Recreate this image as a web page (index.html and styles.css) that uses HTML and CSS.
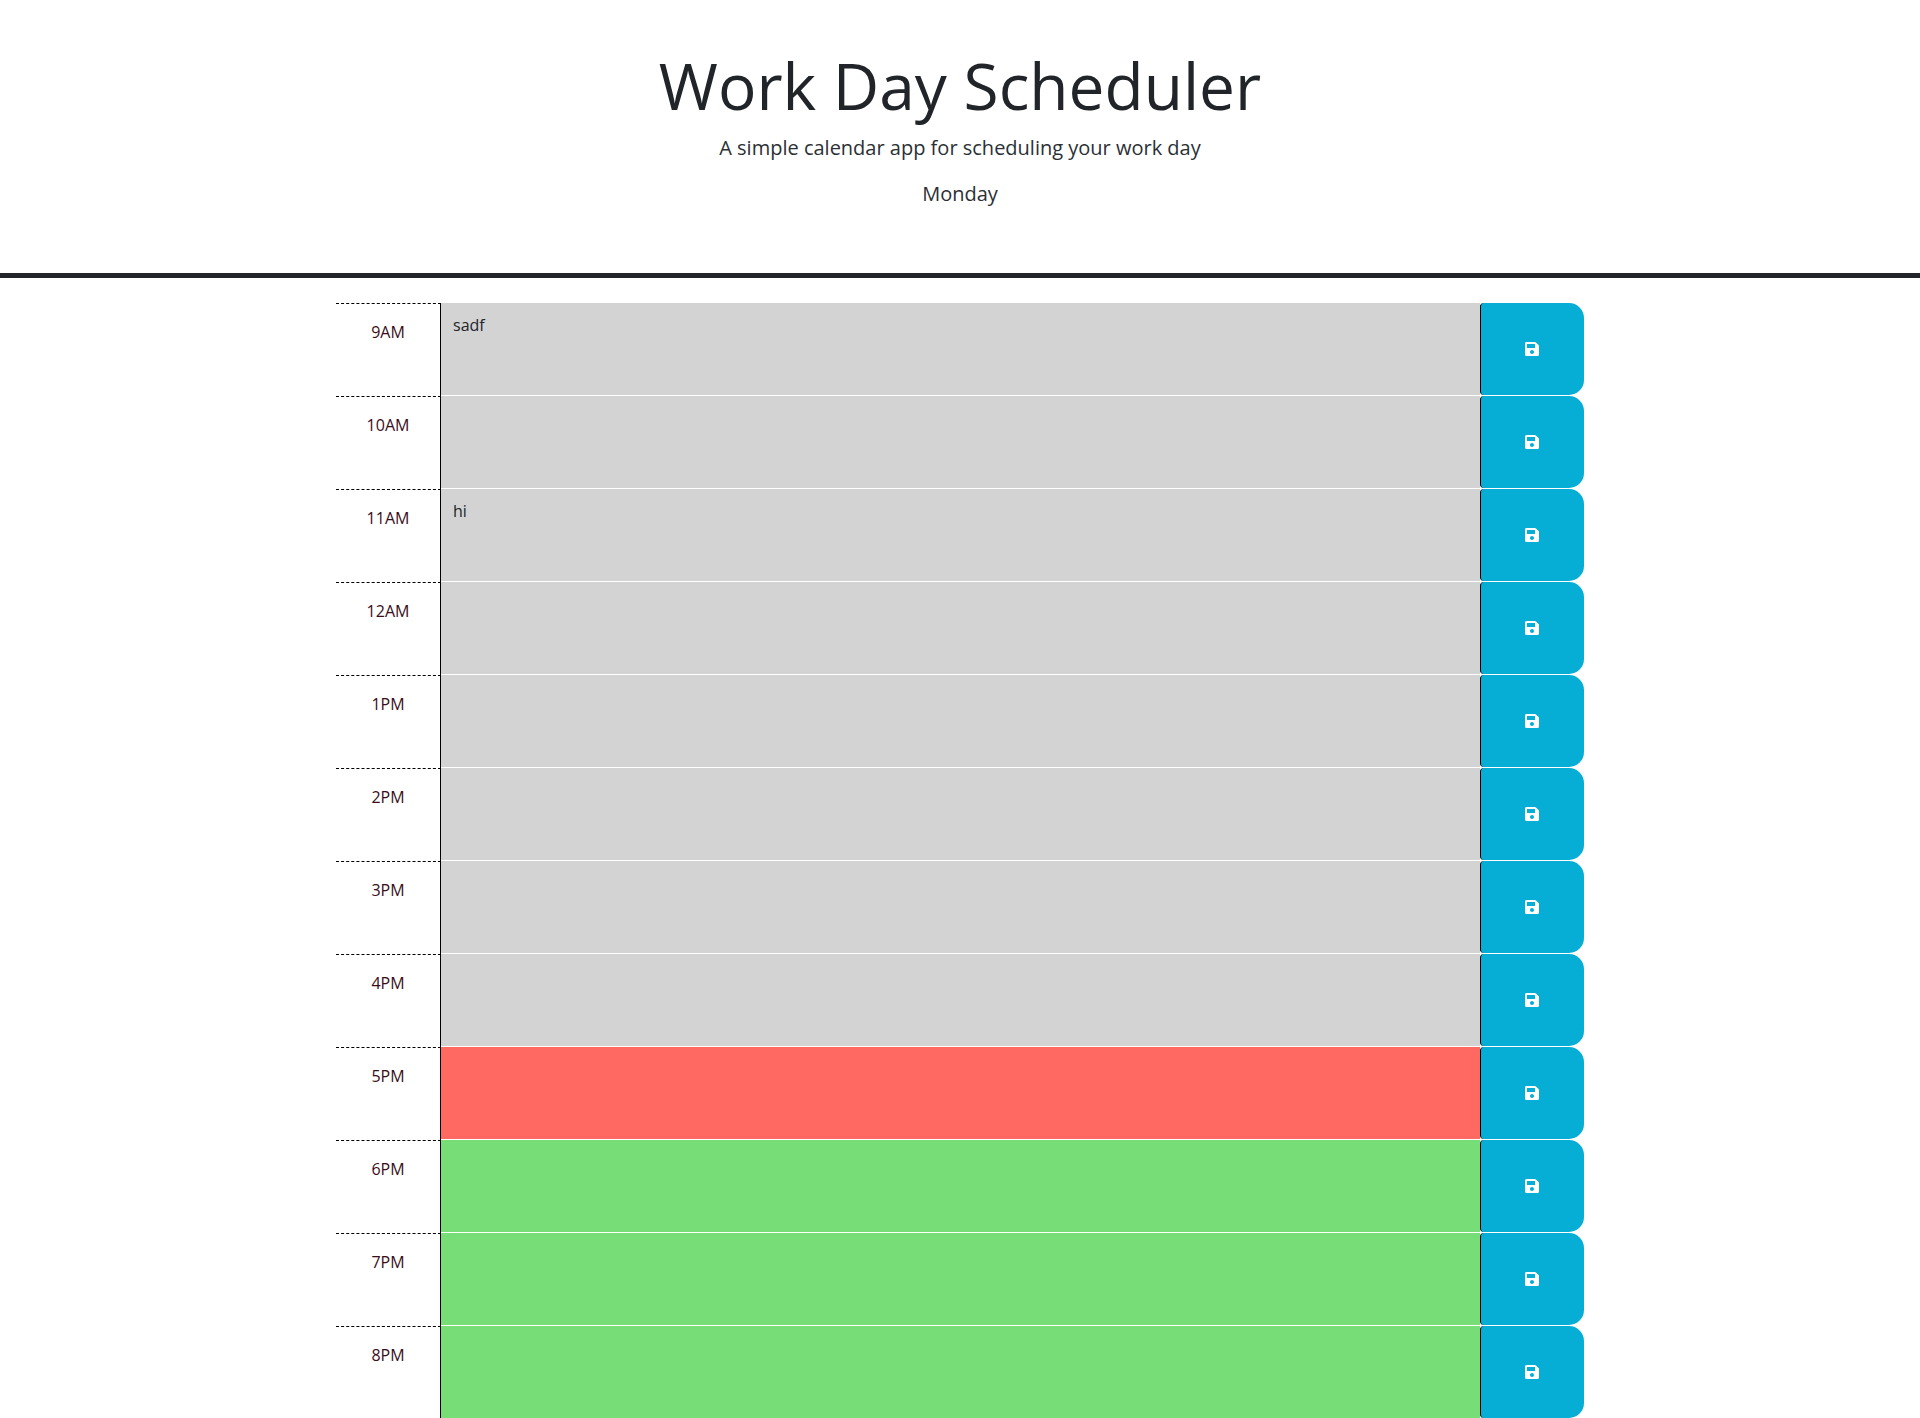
FILE: index.html
```html
<!DOCTYPE html>
<html lang="en">
<head>
<meta charset="utf-8">
<title>Work Day Scheduler</title>
<link rel="stylesheet" href="styles.css">
</head>
<body>
<svg class="defs" width="0" height="0" aria-hidden="true"><symbol id="save" viewBox="0 0 448 512"><path d="M433.941 129.941l-83.882-83.882A48 48 0 0 0 316.118 32H48C21.49 32 0 53.49 0 80v352c0 26.51 21.49 48 48 48h352c26.51 0 48-21.49 48-48V163.882a48 48 0 0 0-14.059-33.941zM224 416c-35.346 0-64-28.654-64-64 0-35.346 28.654-64 64-64s64 28.654 64 64c0 35.346-28.654 64-64 64zm96-304.52V212c0 6.627-5.373 12-12 12H76c-6.627 0-12-5.373-12-12V108c0-6.627 5.373-12 12-12h228.52c3.183 0 6.235 1.264 8.485 3.515l3.48 3.48A11.996 11.996 0 0 1 320 111.48z"/></symbol></svg>
<header class="jumbotron">
  <h1 class="title">Work Day Scheduler</h1>
  <p class="lead">A simple calendar app for scheduling your work day</p>
  <p class="day">Monday</p>
</header>
<main class="schedule">
  <div class="row"><div class="hour">9AM</div><textarea class="task past">sadf</textarea><button class="save" aria-label="Save"><svg class="icon"><use href="#save"/></svg></button></div>
  <div class="row"><div class="hour">10AM</div><textarea class="task past"></textarea><button class="save" aria-label="Save"><svg class="icon"><use href="#save"/></svg></button></div>
  <div class="row"><div class="hour">11AM</div><textarea class="task past">hi</textarea><button class="save" aria-label="Save"><svg class="icon"><use href="#save"/></svg></button></div>
  <div class="row"><div class="hour">12AM</div><textarea class="task past"></textarea><button class="save" aria-label="Save"><svg class="icon"><use href="#save"/></svg></button></div>
  <div class="row"><div class="hour">1PM</div><textarea class="task past"></textarea><button class="save" aria-label="Save"><svg class="icon"><use href="#save"/></svg></button></div>
  <div class="row"><div class="hour">2PM</div><textarea class="task past"></textarea><button class="save" aria-label="Save"><svg class="icon"><use href="#save"/></svg></button></div>
  <div class="row"><div class="hour">3PM</div><textarea class="task past"></textarea><button class="save" aria-label="Save"><svg class="icon"><use href="#save"/></svg></button></div>
  <div class="row"><div class="hour">4PM</div><textarea class="task past"></textarea><button class="save" aria-label="Save"><svg class="icon"><use href="#save"/></svg></button></div>
  <div class="row"><div class="hour">5PM</div><textarea class="task present"></textarea><button class="save" aria-label="Save"><svg class="icon"><use href="#save"/></svg></button></div>
  <div class="row"><div class="hour">6PM</div><textarea class="task future"></textarea><button class="save" aria-label="Save"><svg class="icon"><use href="#save"/></svg></button></div>
  <div class="row"><div class="hour">7PM</div><textarea class="task future"></textarea><button class="save" aria-label="Save"><svg class="icon"><use href="#save"/></svg></button></div>
  <div class="row"><div class="hour">8PM</div><textarea class="task future"></textarea><button class="save" aria-label="Save"><svg class="icon"><use href="#save"/></svg></button></div>
</main>
</body>
</html>
```
FILE: styles.css
```css
* { box-sizing: border-box; }
html, body { margin: 0; padding: 0; }
body {
  background: #fff;
  color: #212529;
  font-family: "Open Sans", sans-serif;
  font-size: 16px;
  line-height: 1.5;
}
.defs { position: absolute; }
.jumbotron {
  height: 278px;
  padding-top: 48px;
  text-align: center;
  border-bottom: 5px solid #212529;
  margin-bottom: 25px;
}
.title {
  margin: 0 0 8px;
  font-size: 64px;
  font-weight: 400;
  line-height: 1.2;
}
.lead {
  margin: 0 0 16px;
  font-size: 20px;
  font-weight: 400;
  line-height: 30px;
  color: #2b3035;
}
.day {
  margin: 0;
  font-size: 20px;
  font-weight: 400;
  line-height: 30px;
  color: #2b3035;
}
.schedule {
  width: 1248px;
  margin: 0 auto;
}
.row {
  display: grid;
  grid-template-columns: 105px 1039px 104px;
  height: 93px;
}
.hour {
  border-top: 1px dashed #000;
  border-right: 1px solid #000;
  padding-top: 16px;
  text-align: center;
  color: #3a0d1a;
}
.task {
  display: block;
  width: 100%;
  height: 100%;
  margin: 0;
  padding: 10px 12px;
  border: 0;
  border-bottom: 1px solid #fff;
  border-radius: 0;
  outline: 0;
  resize: none;
  font: inherit;
  color: #212529;
}
.past { background: #d3d3d3; }
.present { background: #ff6961; }
.future { background: #77dd77; }
.save {
  display: flex;
  align-items: center;
  justify-content: center;
  height: 92px;
  padding: 0 1px 0 0;
  border: 0;
  border-left: 1px solid #000;
  border-radius: 4px 15px 15px 4px;
  background: #06aed5;
  color: #fff;
}
.icon {
  width: 14px;
  height: 16px;
  fill: currentColor;
}
```
